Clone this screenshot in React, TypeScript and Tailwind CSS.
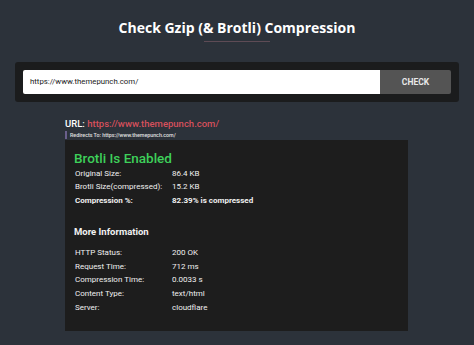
import React from "react";

const rows1: [string, string, boolean?][] = [
  ["Original Size:", "86.4 KB"],
  ["Brotli Size(compressed):", "15.2 KB"],
  ["Compression %:", "82.39% is compressed", true],
];

const rows2: [string, string][] = [
  ["HTTP Status:", "200 OK"],
  ["Request Time:", "712 ms"],
  ["Compression Time:", "0.0033 s"],
  ["Content Type:", "text/html"],
  ["Server:", "cloudflare"],
];

export default function App() {
  return (
    <div className="w-full h-[345px] overflow-hidden bg-[#2c323a] font-['Roboto',sans-serif] text-white">
      <div className="pt-[16px] text-center font-['Open_Sans',sans-serif] font-bold text-[14px] leading-[24px] text-white">
        Check Gzip (&amp; Brotli) Compression
      </div>
      <div className="mx-auto mt-[1px] w-[66px] h-px bg-[#5e4b55]" />
      <div className="mx-[15px] mt-[20px] h-[40px] p-[8px] flex bg-[#1b1c1d] rounded-[3px]">
        <div className="flex-1 h-[24px] bg-white rounded-l-[2px] flex items-center pl-[7px] text-[7.8px] text-[#222]">
          https://www.themepunch.com/
        </div>
        <div className="w-[71px] h-[24px] bg-[#545454] rounded-r-[2px] flex items-center justify-center text-[8.5px] font-bold text-[#e8e8e8]">
          CHECK
        </div>
      </div>
      <div className="ml-[65px] w-[343px] mt-[16px]">
        <div className="text-[9.5px] leading-[12px] font-medium">
          <span className="text-white">URL: </span>
          <span className="text-[#d6505c]">https://www.themepunch.com/</span>
        </div>
        <div className="mt-[1px] border-l-2 border-[#6a5f8c] pl-[3px] text-[5.3px] leading-[8px] text-[#e0e0e0] font-medium">
          Redirects To: https://www.themepunch.com/
        </div>
        <div className="mt-px h-[191px] bg-[#1d1d1d] pl-[9px] pt-[9px]">
          <div className="text-[13.5px] leading-[18px] font-medium text-[#3ed05a]">Brotli Is Enabled</div>
          <div className="pl-px">
            {rows1.map(([k, v, b]) => (
              <div key={k} className={`flex items-center h-[13.5px] text-[8px] ${b ? "font-bold" : ""} text-[#f0f0f0]`}>
                <div className="w-[97px]">{k}</div>
                <div>{v}</div>
              </div>
            ))}
          </div>
          <div className="mt-[17.5px] text-[9.5px] leading-[14px] font-bold text-[#f2f2f2]">More Information</div>
          <div className="mt-[7px] pl-px">
            {rows2.map(([k, v]) => (
              <div key={k} className="flex items-center h-[13.75px] text-[8px] text-[#f0f0f0]">
                <div className="w-[97px]">{k}</div>
                <div>{v}</div>
              </div>
            ))}
          </div>
        </div>
      </div>
    </div>
  );
}
